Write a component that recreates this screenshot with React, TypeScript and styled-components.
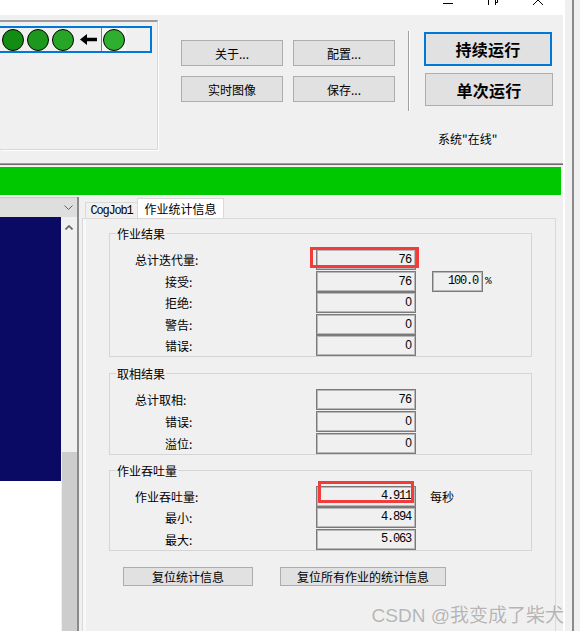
import styled, { createGlobalStyle } from "styled-components";

const GlobalStyle = createGlobalStyle`
  html, body {
    margin: 0;
    padding: 0;
    background: #f0f0f0;
  }
  body {
    font-family: "Noto Sans CJK SC", "Noto Sans", sans-serif;
    font-size: 12px;
    color: #000;
  }
  * {
    box-sizing: border-box;
  }
`;

const Window = styled.div`
  position: relative;
  width: 580px;
  height: 631px;
  overflow: hidden;
  display: flex;
  background: #f0f0f0;
`;

const Main = styled.div`
  width: 563px;
  display: flex;
  flex-direction: column;
`;

const Frame = styled.div`
  flex: 1;
  display: flex;
  border-left: 2px solid #fff;
  padding-left: 7px;
`;

const FrameLine = styled.div`
  width: 2px;
  background: #8a8a8a;
`;

const TitleBar = styled.div`
  height: 15px;
  flex: none;
  background: #fff;
  display: flex;
  justify-content: flex-end;
  gap: 35px;
  padding-right: 20px;
  overflow: hidden;
`;

const Caption = styled.svg`
  flex: none;
  margin-top: -5px;
`;

const TopArea = styled.div`
  height: 145px;
  flex: none;
  display: flex;
  align-items: flex-start;
`;

const LedPanel = styled.div`
  width: 158px;
  height: 130px;
  margin-top: 5px;
  border-top: 2px solid #9a9a9a;
  border-right: 1px solid #d8d8d8;
  border-bottom: 1px solid #d8d8d8;
  box-shadow: 1px 1px 0 #fff;
  padding-top: 4px;
`;

const LedStrip = styled.div`
  width: 152px;
  height: 27px;
  border: 2px solid #0078d7;
  border-left: none;
  display: flex;
  align-items: center;
  padding-left: 2px;
`;

const Led = styled.span<{ $color: string }>`
  width: 22px;
  height: 22px;
  flex: none;
  border-radius: 50%;
  border: 1px solid #000;
  background: ${(p) => p.$color};
  & + & {
    margin-left: 3px;
  }
`;

const Arrow = styled.svg`
  flex: none;
  margin-left: 6px;
`;

const LedCell = styled.div`
  height: 100%;
  margin-left: 4px;
  padding-left: 1px;
  width: 25px;
  border-left: 1px solid #808080;
  background: #f7f7f7;
  display: flex;
  align-items: center;
`;

const ButtonGrid = styled.div`
  margin-left: 23px;
  margin-top: 25px;
  display: grid;
  grid-template-columns: 102px 102px;
  grid-auto-rows: 26px;
  gap: 10px;
`;

const WinButton = styled.button`
  margin: 0;
  padding: 0;
  background: #e1e1e1;
  border: 1px solid #adadad;
  font-family: "Noto Sans CJK SC", "Noto Sans", sans-serif;
  font-size: 12px;
  color: #000;
`;

const VSep = styled.div`
  margin-left: 13px;
  margin-top: 16px;
  width: 2px;
  height: 80px;
  border-left: 1px solid #a0a0a0;
  border-right: 1px solid #fff;
`;

const RunColumn = styled.div`
  margin-left: 14px;
  margin-top: 17px;
  width: 130px;
  display: flex;
  flex-direction: column;
`;

const RunButton = styled(WinButton)<{ $primary?: boolean }>`
  width: 128px;
  height: ${(p) => (p.$primary ? 34 : 33)}px;
  border: ${(p) => (p.$primary ? "2px solid #0078d7" : "1px solid #adadad")};
  margin-left: ${(p) => (p.$primary ? 0 : 1)}px;
  margin-top: ${(p) => (p.$primary ? 0 : 7)}px;
  font-size: 16px;
  font-weight: 700;
  letter-spacing: 0.3px;
`;

const Status = styled.div`
  margin-top: 24px;
  padding-left: 14px;
  line-height: 17px;
`;

const Divider = styled.div`
  flex: none;
  height: 2px;
  margin: 3px 0 2px;
  border-top: 1px solid #a0a0a0;
  border-bottom: 1px solid #6a6a6a;
`;

const GreenBar = styled.div`
  flex: none;
  height: 28px;
  margin-right: 2px;
  background: #00c800;
`;

const Bottom = styled.div`
  flex: 1;
  min-height: 0;
  margin-top: 2px;
  display: flex;
`;

const LeftPanel = styled.div`
  width: 77px;
  display: flex;
  flex-direction: column;
`;

const ComboHeader = styled.div`
  height: 20px;
  flex: none;
  background: #dedede;
  border-top: 1px solid #c8c8c8;
  display: flex;
  align-items: center;
  justify-content: flex-end;
  padding-right: 4px;
`;

const ViewArea = styled.div`
  flex: 1;
  display: flex;
`;

const Viewport = styled.div`
  width: 61px;
  display: flex;
  flex-direction: column;
  background: #fff;
`;

const ImageView = styled.div`
  height: 264px;
  background: #0a0a64;
`;

const ScrollBar = styled.div`
  width: 16px;
  display: flex;
  flex-direction: column;
  align-items: center;
  background: #f0f0f0;
  padding-top: 8px;
`;

const Thumb = styled.div`
  margin-top: auto;
  width: 15px;
  height: 179px;
  background: #cdcdcd;
`;

const Splitter = styled.div`
  width: 5px;
  border-left: 2px solid #8a8a8a;
  background: #f0f0f0;
`;

const TabArea = styled.div`
  width: 474px;
  display: flex;
  flex-direction: column;
`;

const TabsRow = styled.div`
  height: 20px;
  margin-top: 1px;
  padding-left: 3px;
  display: flex;
  align-items: flex-end;
`;

const Tab = styled.div<{ $active?: boolean }>`
  height: ${(p) => (p.$active ? 20 : 16)}px;
  width: ${(p) => (p.$active ? 87 : 52)}px;
  border: 1px solid #d9d9d9;
  border-bottom: none;
  border-right: ${(p) => (p.$active ? "1px solid #d9d9d9" : "none")};
  background: ${(p) => (p.$active ? "#fff" : "#f0f0f0")};
  display: flex;
  align-items: center;
  justify-content: center;
  font-size: 12px;
  line-height: 1;
`;

const MonoText = styled.span`
  font-family: "Liberation Mono", "DejaVu Sans Mono", monospace;
  font-size: 12px;
  letter-spacing: -1.2px;
  padding-top: 1px;
`;

const Pane = styled.div`
  flex: 1;
  border: 1px solid #d9d9d9;
  border-bottom: none;
  box-shadow: inset 3px 0 0 #f8f8f8;
  padding: 6px 23px 0 26px;
`;

const Group = styled.fieldset<{ $gap: number }>`
  margin: ${(p) => p.$gap}px 0 0;
  padding: 7px 0 0;
  min-width: 0;
  border: 1px solid #d5d5d5;
`;

const Legend = styled.legend`
  margin-left: 6px;
  padding: 0 1px;
  line-height: 17px;
  font-size: 12px;
`;

const Rows = styled.div`
  display: flex;
  flex-direction: column;
  gap: 0.6px;
`;

const Row = styled.div`
  height: 21px;
  display: flex;
  align-items: center;
`;

const Label = styled.div<{ $indent: number }>`
  width: 206px;
  padding-left: ${(p) => p.$indent}px;
  line-height: 17px;
`;

const ValueBox = styled.div<{ $mono?: boolean; $width?: number }>`
  position: relative;
  width: ${(p) => p.$width ?? 100}px;
  height: 21px;
  border: 1px solid #7a7a7a;
  box-shadow: inset 0 0 0 1px #b8b8b8;
  text-align: right;
  padding-right: ${(p) => (p.$mono ? 4 : 3)}px;
  line-height: 19px;
  font-family: ${(p) =>
    p.$mono ? '"Liberation Mono", "DejaVu Sans Mono", monospace' : '"Liberation Sans", Arial, sans-serif'};
  font-size: 12px;
  letter-spacing: ${(p) => (p.$mono ? -1.2 : 0)}px;
`;

const Mark = styled.div<{ $t: number; $l: number; $r: number; $b: number }>`
  position: absolute;
  top: ${(p) => p.$t}px;
  left: ${(p) => p.$l}px;
  right: ${(p) => p.$r}px;
  bottom: ${(p) => p.$b}px;
  border: 3px solid #f23c3c;
  pointer-events: none;
`;

const Extra = styled.div<{ $gap: number }>`
  margin-left: ${(p) => p.$gap}px;
  display: flex;
  align-items: center;
`;

const Percent = styled.span`
  margin-left: 2px;
  font-family: "Liberation Mono", monospace;
  font-size: 11px;
`;

const ResetRow = styled.div`
  margin-top: 16px;
  padding-left: 14px;
  display: flex;
  gap: 27px;
`;

const ResetButton = styled(WinButton)<{ $w: number }>`
  width: ${(p) => p.$w}px;
  height: 19px;
  line-height: 15px;
`;

const Watermark = styled.div`
  position: absolute;
  right: 16px;
  top: 600px;
  font-family: "Liberation Sans", "Noto Sans CJK SC", sans-serif;
  font-size: 19px;
  color: #b5b5b5;
  text-shadow: 0 0 1px #fff;
  pointer-events: none;
`;

type Stat = {
  label: string;
  value: string;
  wide?: boolean;
  mono?: boolean;
  pct?: string;
  unit?: string;
  mark?: { t: number; l: number; r: number; b: number };
};

const groups: { title: string; gap: number; rows: Stat[] }[] = [
  {
    title: "作业结果",
    gap: 0,
    rows: [
      { label: "总计迭代量:", value: "76", wide: true, mark: { t: -3, l: -7, r: -4, b: 1 } },
      { label: "接受:", value: "76", pct: "100.0" },
      { label: "拒绝:", value: "0" },
      { label: "警告:", value: "0" },
      { label: "错误:", value: "0" },
    ],
  },
  {
    title: "取相结果",
    gap: 8,
    rows: [
      { label: "总计取相:", value: "76", wide: true },
      { label: "错误:", value: "0" },
      { label: "溢位:", value: "0" },
    ],
  },
  {
    title: "作业吞吐量",
    gap: 7,
    rows: [
      { label: "作业吞吐量:", value: "4.911", wide: true, mono: true, unit: "每秒", mark: { t: -6, l: 1, r: 1, b: 3 } },
      { label: "最小:", value: "4.894", mono: true },
      { label: "最大:", value: "5.063", mono: true },
    ],
  },
];

const leds = ["#128c12", "#1c981c", "#27a527"];

export default function App() {
  return (
    <>
      <GlobalStyle />
      <Window>
        <Main>
          <TitleBar>
            <Caption width="10" height="10" viewBox="0 0 10 10">
              <path d="M0 8.5H10" stroke="#000" strokeWidth="1" />
            </Caption>
            <Caption width="10" height="10" viewBox="0 0 10 10">
              <path d="M0.5 0V10.5H7.5V0M7.5 7.5H9.5V0" stroke="#000" strokeWidth="1" fill="none" />
            </Caption>
            <Caption width="10" height="10" viewBox="0 0 10 10">
              <path d="M0 0L10 10M10 0L0 10" stroke="#000" strokeWidth="1" />
            </Caption>
          </TitleBar>

          <TopArea>
            <LedPanel>
              <LedStrip>
                {leds.map((c) => (
                  <Led key={c} $color={c} />
                ))}
                <Arrow width="17" height="11" viewBox="0 0 17 11">
                  <path d="M0 5.5L7 0V3.8H17V7.2H7V11Z" fill="#000" />
                </Arrow>
                <LedCell>
                  <Led $color="#2eb02e" />
                </LedCell>
              </LedStrip>
            </LedPanel>

            <ButtonGrid>
              <WinButton>关于...</WinButton>
              <WinButton>配置...</WinButton>
              <WinButton>实时图像</WinButton>
              <WinButton>保存...</WinButton>
            </ButtonGrid>

            <VSep />

            <RunColumn>
              <RunButton $primary>持续运行</RunButton>
              <RunButton>单次运行</RunButton>
              <Status>系统"在线"</Status>
            </RunColumn>
          </TopArea>

          <Divider />
          <GreenBar />

          <Bottom>
            <LeftPanel>
              <ComboHeader>
                <svg width="9" height="6" viewBox="0 0 9 6">
                  <polyline points="0.5,0.5 4.5,4.5 8.5,0.5" fill="none" stroke="#606060" strokeWidth="1" />
                </svg>
              </ComboHeader>
              <ViewArea>
                <Viewport>
                  <ImageView />
                </Viewport>
                <ScrollBar>
                  <svg width="8" height="5" viewBox="0 0 8 5">
                    <polyline points="0.5,4.5 4,1 7.5,4.5" fill="none" stroke="#606060" strokeWidth="1.6" />
                  </svg>
                  <Thumb />
                </ScrollBar>
              </ViewArea>
            </LeftPanel>

            <Splitter />

            <TabArea>
              <TabsRow>
                <Tab>
                  <MonoText>CogJob1</MonoText>
                </Tab>
                <Tab $active>作业统计信息</Tab>
              </TabsRow>
              <Pane>
                {groups.map((g) => (
                  <Group key={g.title} $gap={g.gap}>
                    <Legend>{g.title}</Legend>
                    <Rows>
                      {g.rows.map((r) => (
                        <Row key={r.label}>
                          <Label $indent={r.wide ? 25 : 55}>{r.label}</Label>
                          <ValueBox $mono={r.mono}>
                            {r.value}
                            {r.mark && <Mark $t={r.mark.t} $l={r.mark.l} $r={r.mark.r} $b={r.mark.b} />}
                          </ValueBox>
                          {r.pct && (
                            <Extra $gap={16}>
                              <ValueBox $mono $width={51}>
                                {r.pct}
                              </ValueBox>
                              <Percent>%</Percent>
                            </Extra>
                          )}
                          {r.unit && <Extra $gap={14}>{r.unit}</Extra>}
                        </Row>
                      ))}
                    </Rows>
                  </Group>
                ))}
                <ResetRow>
                  <ResetButton $w={130}>复位统计信息</ResetButton>
                  <ResetButton $w={166}>复位所有作业的统计信息</ResetButton>
                </ResetRow>
              </Pane>
            </TabArea>
          </Bottom>
        </Main>
        <Frame>
          <FrameLine />
        </Frame>
        <Watermark>CSDN @我变成了柴犬</Watermark>
      </Window>
    </>
  );
}
